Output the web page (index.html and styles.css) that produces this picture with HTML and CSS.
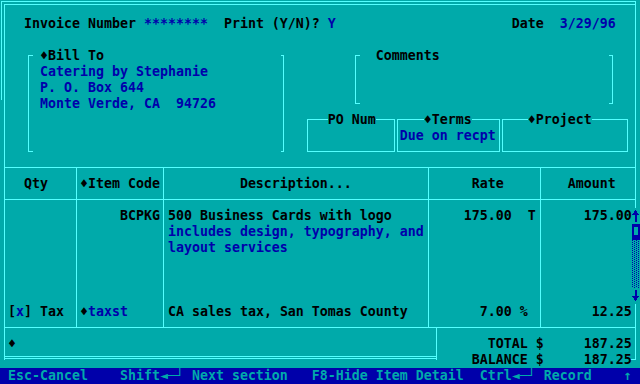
FILE: index.html
```html
<!DOCTYPE html>
<html lang="en">
<head>
  <meta charset="UTF-8" />
  <title>Invoice</title>
  <link rel="stylesheet" href="styles.css">
</head>
<body>
  <div class="screen">
    <div class="form">
      <svg class="lines" width="640" height="368" viewBox="0 0 640 368" shape-rendering="crispEdges">
        <defs>
          <pattern id="shade" width="4" height="2" patternUnits="userSpaceOnUse">
            <rect x="0" y="0" width="1" height="1" fill="#0000aa" />
            <rect x="2" y="1" width="1" height="1" fill="#0000aa" />
          </pattern>
        </defs>
        <g fill="none" stroke="#55ffff" stroke-width="1">
          <!-- outer frame -->
          <path d="M1.5 100 V1.5 H635.5 M4.5 359.5 V4.5 H635.5 M635.5 1.5 V208 M635.5 304 V359.5 M629.5 359.5 H635.5" />
          <!-- bill to / comments brackets -->
          <path d="M32.5 55.5 H28.5 V151.5 H32.5 M280.5 55.5 H283.5 V151.5 H280.5" />
          <path d="M359.5 55.5 H355.5 V103.5 H359.5 M608.5 55.5 H612.5 V103.5 H608.5" />
          <!-- po / terms / project boxes -->
          <rect x="307.5" y="119.5" width="87" height="32" />
          <rect x="397.5" y="119.5" width="102" height="32" />
          <rect x="502.5" y="119.5" width="125" height="32" />
          <!-- item grid -->
          <path d="M4.5 167.5 H635.5 M4.5 199.5 H635.5 M4.5 327.5 H635.5" />
          <path d="M76.5 167.5 V327.5 M163.5 167.5 V327.5 M428.5 167.5 V327.5 M540.5 167.5 V327.5" />
          <!-- memo box -->
          <path d="M436.5 327.5 V359.5 M4.5 356.5 H436.5 M4.5 358.5 H436.5" />
        </g>
        <!-- scroll bar -->
        <g fill="#0000aa">
          <polygon points="632,215 635.5,210 639,215" />
          <rect x="635" y="213" width="2" height="9" />
          <rect x="632" y="224" width="8" height="16" />
          <rect x="632" y="240" width="8" height="48" fill="url(#shade)" />
          <rect x="635" y="290" width="2" height="8" />
          <polygon points="632,296 635.5,301 639,296" />
        </g>
        <rect x="634" y="227" width="4" height="8" fill="#00aaaa" />
      </svg>
      <div class="text">
        <div class="row"></div>
        <div class="row">   Invoice Number <span class="v">********</span>  Print (Y/N)? <span class="v">Y</span>                      Date  <span class="v">3/29/96</span></div>
        <div class="row"></div>
        <div class="row">     ♦Bill To                                  Comments</div>
        <div class="row">     <span class="v">Catering by Stephanie</span></div>
        <div class="row">     <span class="v">P. O. Box 644</span></div>
        <div class="row">     <span class="v">Monte Verde, CA  94726</span></div>
        <div class="row">                                         <span class="label">PO Num</span>      <span class="label">♦Terms</span>       <span class="label">♦Project</span></div>
        <div class="row">                                                  <span class="v">Due on recpt</span></div>
        <div class="row"></div>
        <div class="row"></div>
        <div class="row">   Qty    ♦Item Code          Description...               Rate        Amount</div>
        <div class="row"></div>
        <div class="row">               BCPKG 500 Business Cards with logo         175.00  T      175.00</div>
        <div class="row">                     <span class="v">includes design, typography, and</span></div>
        <div class="row">                     <span class="v">layout services</span></div>
        <div class="row"></div>
        <div class="row"></div>
        <div class="row"></div>
        <div class="row"> [<span class="v">x</span>] Tax  ♦<span class="v">taxst</span>     CA sales tax, San Tomas County         7.00 %        12.25</div>
        <div class="row"></div>
        <div class="row"> ♦                                                           TOTAL $     187.25</div>
        <div class="row">                                                           BALANCE $     187.25</div>
      </div>
    </div>
    <div class="row keys"> Esc-Cancel    Shift◄─┘ Next section   F8-Hide Item Detail  Ctrl◄─┘ Record    ↑</div>
  </div>
</body>
</html>
```

FILE: styles.css
```css
body {
  margin: 0;
  background: #00aaaa;
  overflow: hidden;
  font-family: "DejaVu Sans Mono", "Liberation Mono", monospace;
  font-weight: bold;
  font-size: 13.29px;
  line-height: 16px;
  color: #000;
}

.screen {
  width: 640px;
  height: 384px;
  display: flex;
  flex-direction: column;
}

.form {
  display: grid;
  height: 368px;
}

.form > * {
  grid-area: 1 / 1;
}

.lines {
  display: block;
}

.text {
  display: flex;
  flex-direction: column;
}

.row {
  height: 16px;
  white-space: pre;
}

.v {
  color: #0000aa;
}

.label {
  background: #00aaaa;
}

.keys {
  background: #0000aa;
  color: #00aaaa;
}
```
